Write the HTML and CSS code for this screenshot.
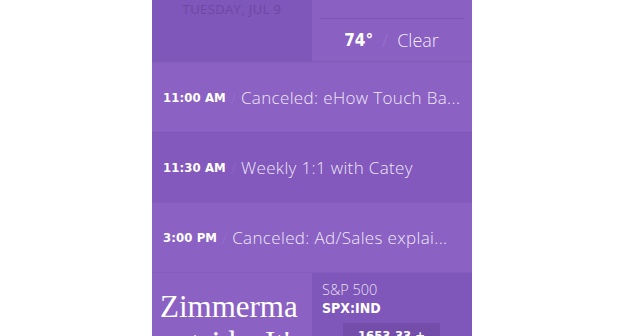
FILE: index.html
```html
<!DOCTYPE html>
<html>
<head>
<meta charset="utf-8">
<link rel="stylesheet" href="styles.css">
</head>
<body>
<div class="phone">
  <div class="top">
    <div class="date">Tuesday, Jul 9</div>
    <div class="weather">
      <div class="rule"></div>
      <div class="temp"><b>74°</b><span class="sep">/</span><span class="cond">Clear</span></div>
    </div>
  </div>
  <div class="event light">
    <span class="time">11:00 AM</span><span class="slash">/</span><span class="title">Canceled: eHow Touch Ba...</span>
  </div>
  <div class="event dark">
    <span class="time">11:30 AM</span><span class="slash">/</span><span class="title">Weekly 1:1 with Catey</span>
  </div>
  <div class="event light">
    <span class="time">3:00 PM</span><span class="slash">/</span><span class="title">Canceled: Ad/Sales explai...</span>
  </div>
  <div class="bottom">
    <div class="news">Zimmerma<br>outside. It's</div>
    <div class="stock">
      <div class="index">S&amp;P 500</div>
      <div class="ticker">SPX:IND</div>
      <div class="quote">1653.33 + 11.86</div>
    </div>
  </div>
</div>
</body>
</html>
```

FILE: styles.css
```css
html, body {
  margin: 0;
  padding: 0;
  background: #ffffff;
}

.phone {
  margin-left: 152px;
  width: 320px;
  height: 336px;
  overflow: hidden;
  background: #8a60c3;
  font-family: "Open Sans", "DejaVu Sans", sans-serif;
  color: #ffffff;
}

.top {
  display: flex;
  height: 62px;
  border-bottom: 1px solid rgba(0, 0, 0, 0.05);
  box-sizing: border-box;
}

.date {
  width: 160px;
  background: #7f56b9;
  color: #6d48a3;
  text-transform: uppercase;
  font-size: 13px;
  letter-spacing: 0.4px;
  text-align: center;
  line-height: 18px;
  padding-top: 0;
}

.weather {
  width: 160px;
  background: #8a60c3;
  display: flex;
  flex-direction: column;
  padding: 18px 8px 0 8px;
  box-sizing: border-box;
}

.rule {
  height: 1px;
  background: rgba(90, 50, 150, 0.25);
}

.temp {
  flex: 1;
  display: flex;
  align-items: center;
  justify-content: center;
  padding-right: 1px;
  font-size: 18px;
}

.temp b {
  font-family: "DejaVu Sans Condensed", "DejaVu Sans", sans-serif;
  font-weight: bold;
  font-size: 17px;
}

.temp .sep {
  color: rgba(255, 255, 255, 0.15);
  margin: 0 9px;
  font-weight: 300;
}

.cond {
  font-weight: 300;
  color: rgba(255, 255, 255, 0.9);
}

.event {
  height: 70px;
  display: flex;
  align-items: center;
  padding-left: 11px;
  box-sizing: border-box;
  border-top: 1px solid rgba(0, 0, 0, 0.03);
}

.event.light {
  background: #8b62c4;
}

.event.dark {
  background: #8459bd;
}

.time {
  font-family: "DejaVu Sans Condensed", "DejaVu Sans", sans-serif;
  font-weight: bold;
  font-size: 13px;
  letter-spacing: 0.1px;
  color: #ffffff;
}

.slash {
  color: rgba(255, 255, 255, 0.1);
  margin: 0 5px;
  font-size: 15px;
  font-weight: 300;
}

.title {
  font-weight: 300;
  font-size: 17px;
  letter-spacing: 0.35px;
  color: rgba(255, 255, 255, 0.88);
  white-space: nowrap;
}

.bottom {
  display: flex;
  height: 64px;
  border-top: 1px solid rgba(0, 0, 0, 0.03);
}

.news {
  width: 160px;
  background: #8b62c4;
  font-family: "Liberation Serif", "DejaVu Serif", serif;
  font-size: 31px;
  line-height: 36px;
  padding: 16px 0 0 8px;
  box-sizing: border-box;
  color: #ffffff;
  overflow: hidden;
}

.stock {
  width: 160px;
  background: #7f56b9;
  padding: 9px 10px 0 10px;
  box-sizing: border-box;
}

.index {
  font-weight: 300;
  font-size: 14.5px;
  line-height: 16px;
  color: rgba(255, 255, 255, 0.85);
}

.ticker {
  font-family: "DejaVu Sans Condensed", "DejaVu Sans", sans-serif;
  font-weight: bold;
  font-size: 14px;
  line-height: 16px;
  margin-top: 2px;
}

.quote {
  margin: 7px 0 0 21px;
  width: 97px;
  background: #744dab;
  font-family: "DejaVu Sans Condensed", "DejaVu Sans", sans-serif;
  font-weight: bold;
  font-size: 13px;
  line-height: 16px;
  padding-top: 5px;
  text-align: center;
}
```
